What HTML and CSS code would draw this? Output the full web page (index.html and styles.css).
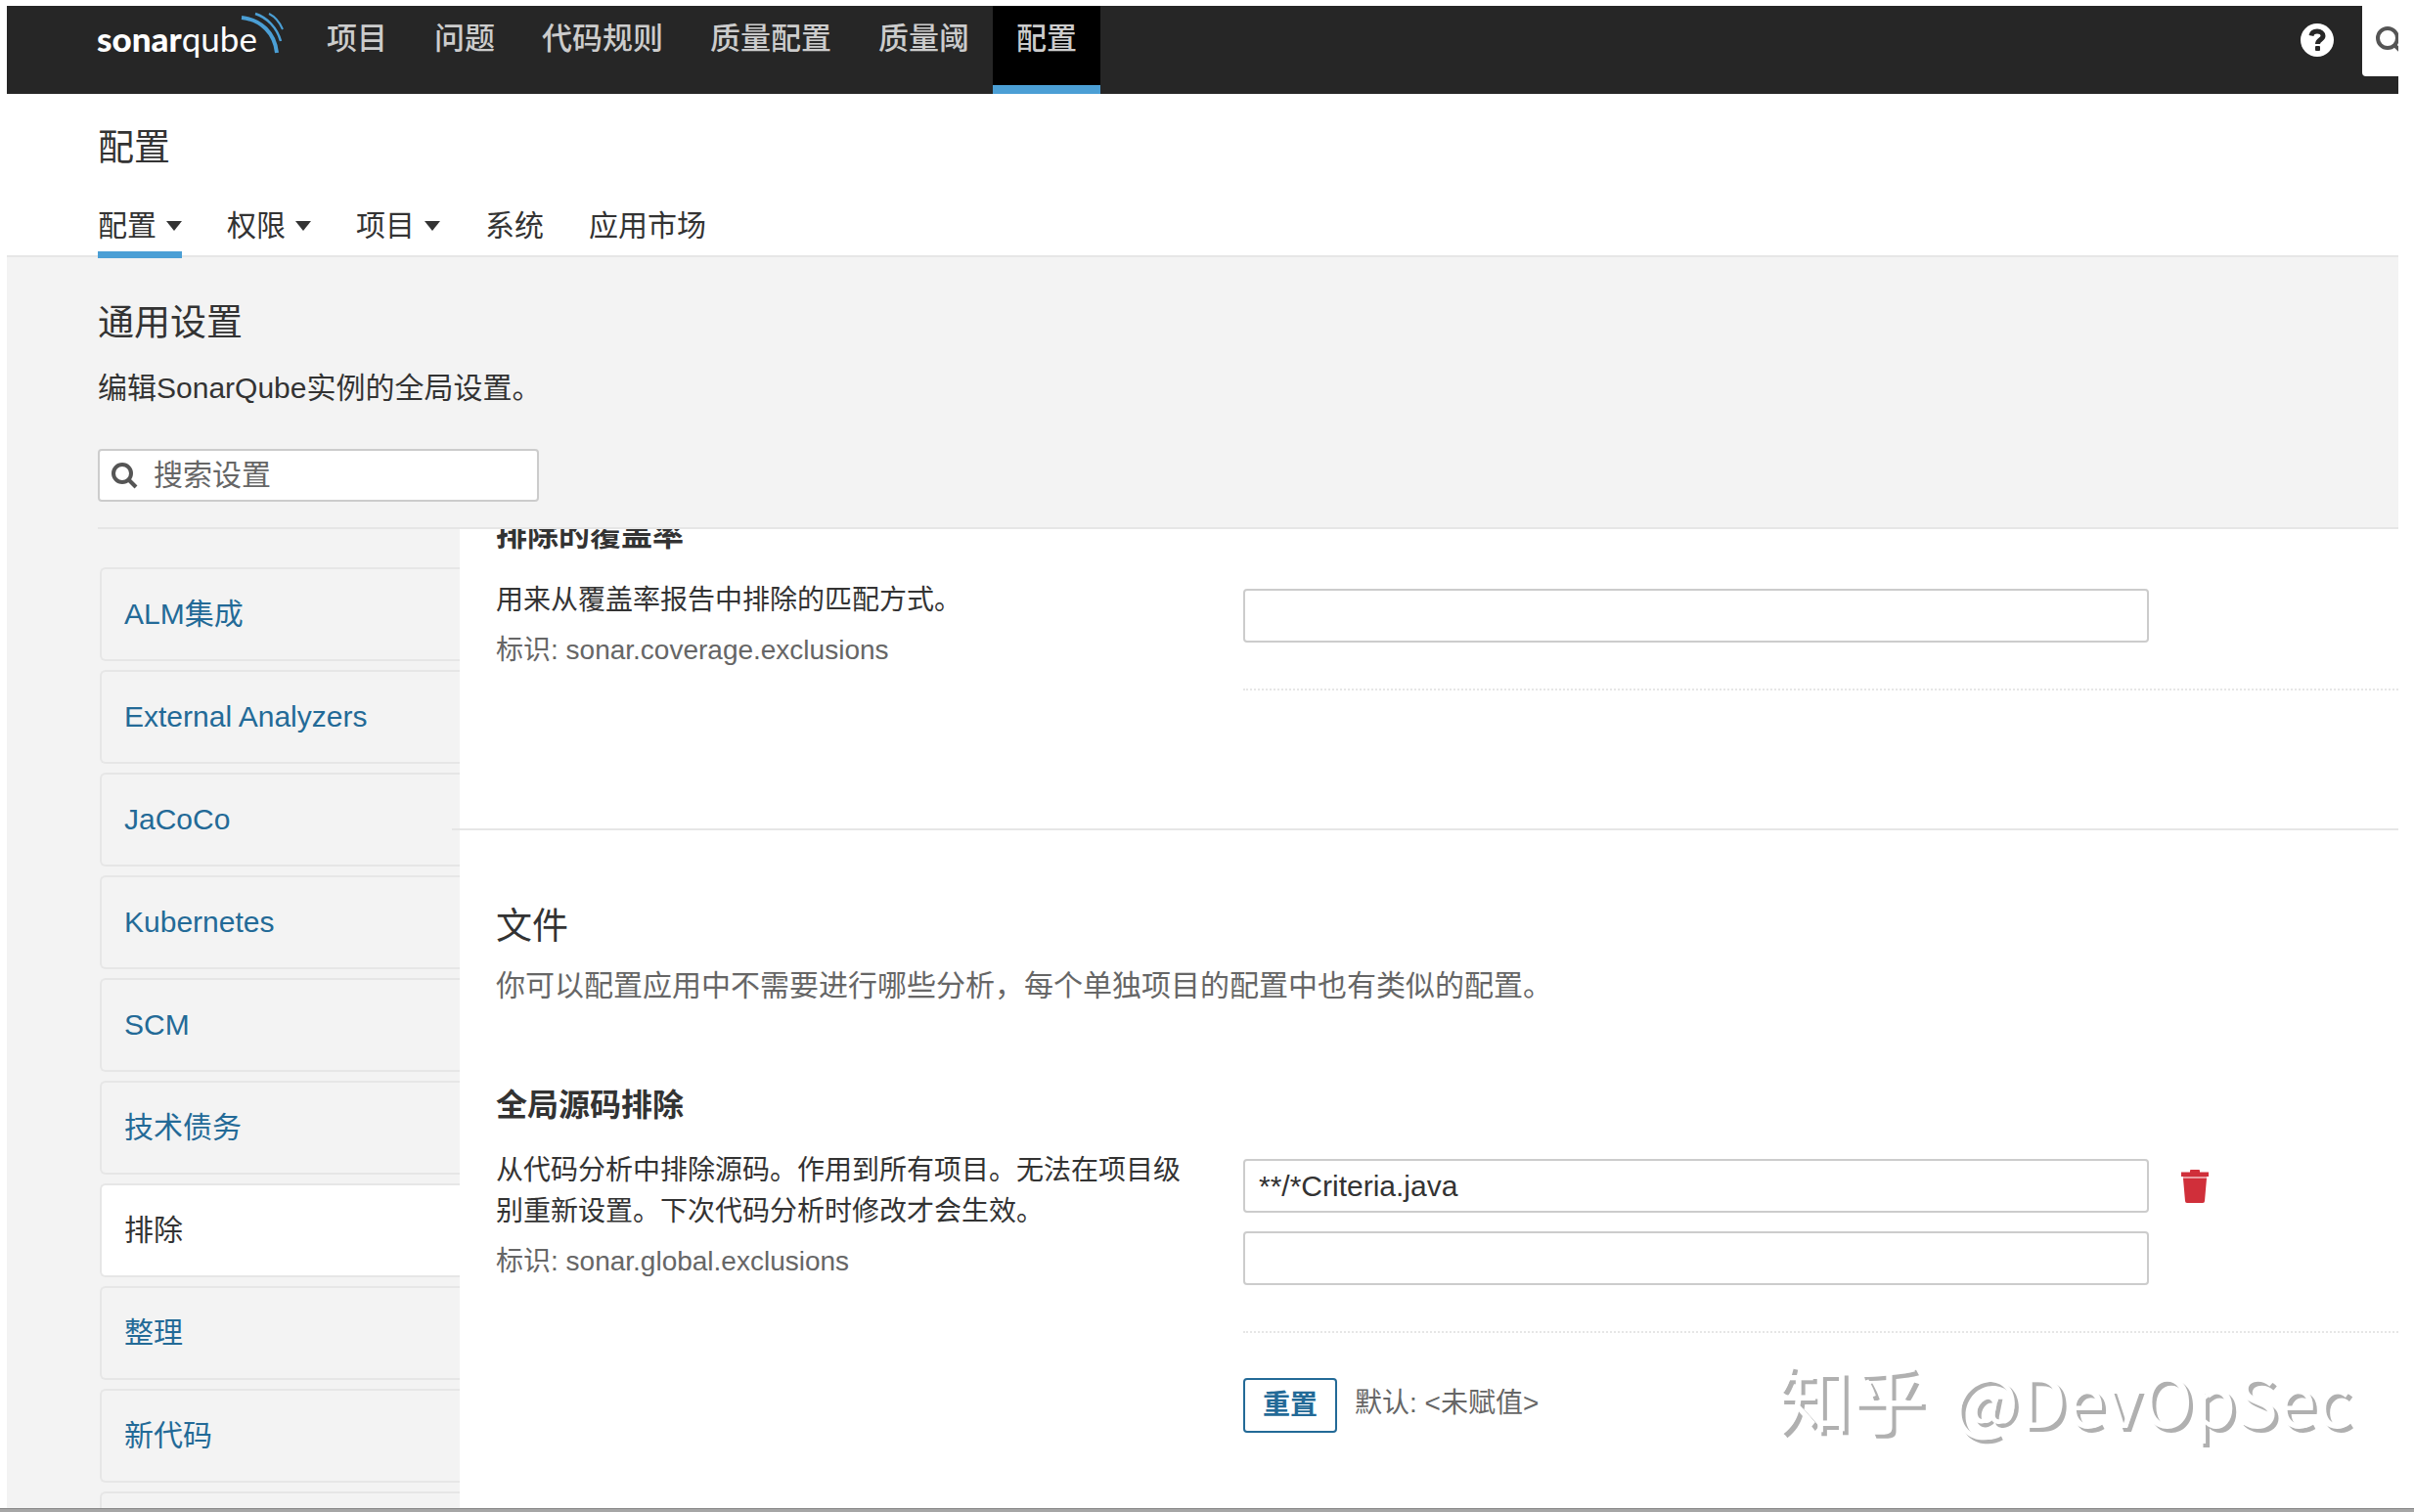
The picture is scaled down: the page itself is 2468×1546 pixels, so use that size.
FILE: index.html
```html
<!DOCTYPE html>
<html lang="zh-CN">
<head>
    <meta charset="UTF-8">
    <meta name="viewport" content="width=device-width, initial-scale=1.0">
    <title>通用设置 - SonarQube</title>
    <link rel="stylesheet" href="styles.css">
</head>
<body>

<div class="app">
    <header class="navbar">
        <a class="logo" href="#">
            <span class="logo-text"><b>sonar</b>qube</span>
            <svg class="logo-waves" width="46" height="44" viewBox="0 0 46 44" fill="none" stroke="#4b9fd5">
                <path d="M2 6C22 8 36 22 38 42" stroke-width="4"/>
                <path d="M16 2C28 6 38 16 42 30" stroke-width="2.500"/>
                <path d="M30 2C36 5 41 11 44 18" stroke-width="2"/>
            </svg>
        </a>
        <nav class="main-nav">
            <a href="#">项目</a>
            <a href="#">问题</a>
            <a href="#">代码规则</a>
            <a href="#">质量配置</a>
            <a href="#">质量阈</a>
            <a href="#" class="active">配置</a>
        </nav>
        <button class="help" type="button" aria-label="帮助">
            <svg width="34" height="34" viewBox="0 0 34 34">
                <circle cx="17" cy="17" r="17" fill="#fff"/>
                <path d="M11 12.500C11.500 9.500 14 8 17 8C20.500 8 23 10 23 12.800C23 16.500 17.500 16.500 17.500 21" fill="none" stroke="#262626" stroke-width="5"/>
                <rect x="15" y="23" width="5" height="5" rx="1" fill="#262626"/>
            </svg>
        </button>
        <button class="nav-search" type="button" aria-label="搜索">
            <svg width="30" height="30" viewBox="0 0 30 30" fill="none" stroke="#555" stroke-width="4">
                <circle cx="12" cy="12" r="10"/>
                <path d="M19 19L28 28"/>
            </svg>
        </button>
    </header>

    <div class="context">
        <h1>配置</h1>
        <nav class="tabs">
            <a href="#" class="active">配置 <i class="caret"></i></a>
            <a href="#">权限 <i class="caret"></i></a>
            <a href="#">项目 <i class="caret"></i></a>
            <a href="#">系统</a>
            <a href="#">应用市场</a>
        </nav>
    </div>

    <main class="page">
        <div class="page-header">
            <h2>通用设置</h2>
            <p>编辑SonarQube实例的全局设置。</p>
            <label class="search-box">
                <svg width="28" height="28" viewBox="0 0 28 28" fill="none" stroke="#555" stroke-width="4">
                    <circle cx="12" cy="12" r="9"/>
                    <path d="M18 18L26 26"/>
                </svg>
                <input type="text" placeholder="搜索设置" aria-label="搜索设置">
            </label>
        </div>

        <div class="settings">
            <nav class="side-menu">
                <a href="#">ALM集成</a>
                <a href="#">External Analyzers</a>
                <a href="#">JaCoCo</a>
                <a href="#">Kubernetes</a>
                <a href="#">SCM</a>
                <a href="#">技术债务</a>
                <a href="#" class="active">排除</a>
                <a href="#">整理</a>
                <a href="#">新代码</a>
                <a href="#" aria-label="更多"></a>
            </nav>

            <div class="panel">
                <section class="category scrolled">
                    <div class="definition">
                        <div class="info">
                            <h4>排除的覆盖率</h4>
                            <p class="desc">用来从覆盖率报告中排除的匹配方式。</p>
                            <p class="key">标识: sonar.coverage.exclusions</p>
                        </div>
                        <div class="values">
                            <div class="value-row">
                                <input type="text" aria-label="排除的覆盖率">
                            </div>
                            <div class="actions"></div>
                        </div>
                    </div>
                </section>

                <section class="category">
                    <h3>文件</h3>
                    <p class="category-desc">你可以配置应用中不需要进行哪些分析，每个单独项目的配置中也有类似的配置。</p>
                    <div class="definition">
                        <div class="info">
                            <h4>全局源码排除</h4>
                            <p class="desc">从代码分析中排除源码。作用到所有项目。无法在项目级别重新设置。下次代码分析时修改才会生效。</p>
                            <p class="key">标识: sonar.global.exclusions</p>
                        </div>
                        <div class="values">
                            <div class="value-row">
                                <input type="text" value="**/*Criteria.java" aria-label="全局源码排除">
                                <button class="delete" type="button" aria-label="删除">
                                    <svg width="28" height="34" viewBox="0 0 28 34" fill="#d02f3a">
                                        <path d="M0 2.500H9V1Q9 0 10 0H18Q19 0 19 1V2.500H28V7H0Z"/>
                                        <path d="M2 9H26L24 32Q24 34 22 34H6Q4 34 4 32Z"/>
                                        <rect x="2" y="7" width="24" height="2" fill="#eb9ba0"/>
                                    </svg>
                                </button>
                            </div>
                            <div class="value-row">
                                <input type="text" aria-label="全局源码排除">
                            </div>
                            <div class="actions">
                                <button class="reset" type="button">重置</button>
                                <span>默认: &lt;未赋值&gt;</span>
                            </div>
                        </div>
                    </div>
                </section>
            </div>
        </div>
    </main>
</div>

<div class="bottom-edge"></div>
<div class="watermark"><b>知乎</b><span>@DevOpSec</span></div>

</body>
</html>
```
FILE: styles.css
```css
* {
    box-sizing: border-box;
}

body {
    display: flex;
    flex-direction: column;
    height: 100vh;
    margin: 0;
    overflow: hidden;
    background-color: #fff;
    color: #333;
    font-family: "Liberation Sans", "Noto Sans CJK SC", sans-serif;
    font-size: 30px;
    line-height: 42px;
}

h1, h2, h3, h4, p {
    margin: 0;
}

h1, h2, h3 {
    font-size: 37px;
    font-weight: normal;
    line-height: 46px;
}

a {
    color: #236a97;
    text-decoration: none;
}

input, button {
    font: inherit;
    color: inherit;
}

button {
    padding: 0;
    border: none;
    background: none;
    cursor: pointer;
}

svg {
    display: block;
}

.app {
    display: flex;
    flex: 1;
    flex-direction: column;
    min-height: 0;
    margin: 6px 16px 0 7px;
}

/* top bar */
.navbar {
    display: flex;
    align-items: flex-start;
    height: 90px;
    padding-left: 92px;
    background-color: #262626;
}

.logo {
    display: flex;
    align-items: flex-start;
    width: 211px;
    padding-top: 6px;
    color: #fff;
}

.logo-text {
    padding-top: 6px;
    font-family: Lato, sans-serif;
    font-size: 35px;
    font-weight: 400;
}

.logo-text b {
    font-weight: 900;
}

.logo-waves {
    margin-left: -18px;
}

.main-nav {
    display: flex;
    flex: 1;
}

.main-nav a {
    height: 90px;
    padding: 13px 24px 0;
    color: #ccc;
    font-size: 31px;
    font-weight: 500;
}

.main-nav .active {
    border-bottom: 9px solid #4b9fd5;
    background-color: #000;
}

.help {
    margin: 18px 29px 0 0;
}

.nav-search {
    width: 37px;
    height: 72px;
    padding-left: 14px;
    overflow: hidden;
    border-bottom-left-radius: 4px;
    background-color: #fff;
}

/* administration header */
.context {
    position: relative;
    padding: 33px 93px 0;
    border-bottom: 2px solid #e6e6e6;
}

.tabs {
    display: flex;
    gap: 46px;
    margin: 34px 0 -3px;
}

.tabs a {
    display: flex;
    align-items: center;
    gap: 10px;
    padding: 1px 0 5px;
    border-bottom: 7px solid transparent;
    color: #333;
}

.tabs .active {
    border-bottom-color: #4b9fd5;
}

.caret {
    border: 8px solid transparent;
    border-top: 10px solid #333;
    border-bottom: none;
}

/* settings page */
.page {
    display: flex;
    flex: 1;
    flex-direction: column;
    min-height: 0;
    padding-left: 93px;
    background-color: #f3f3f3;
}

.page-header {
    padding: 45px 0 26px;
    border-bottom: 2px solid #e6e6e6;
}

.page-header p {
    margin: 22px 0 41px;
}

.search-box {
    display: flex;
    align-items: center;
    gap: 16px;
    width: 451px;
    height: 54px;
    padding: 0 11px;
    border: 2px solid #ccc;
    border-radius: 4px;
    background-color: #fff;
}

.search-box input {
    flex: 1;
    min-width: 0;
    padding: 0;
    border: none;
    outline: none;
}

.search-box input::placeholder {
    color: #666;
}

.settings {
    display: flex;
    flex: 1;
    min-height: 0;
    overflow: hidden;
}

.side-menu {
    display: flex;
    flex-direction: column;
    flex: none;
    gap: 9px;
    width: 370px;
    padding: 39px 0 0 2px;
}

.side-menu a {
    flex: none;
    height: 96px;
    padding: 25px 23px;
    border: 2px solid #e6e6e6;
    border-right: none;
    border-radius: 6px 0 0 6px;
}

.side-menu .active {
    background-color: #fff;
    color: #333;
}

.panel {
    flex: 1;
    background-color: #fff;
}

.category {
    margin-left: -8px;
    padding: 76px 0 0 45px;
}

.category + .category {
    border-top: 2px solid #e6e6e6;
}

/* first category is partly scrolled under the page header */
.scrolled {
    margin-top: -17px;
    padding-top: 0;
    padding-bottom: 141px;
}

.category-desc {
    margin: 16px 0 78px;
    color: #666;
}

.definition {
    display: grid;
    grid-template-columns: 716px 1fr;
    gap: 48px;
}

.info {
    font-size: 28px;
}

.info h4 {
    margin-bottom: 23px;
    font-size: 32px;
    line-height: 46px;
}

.key {
    margin-top: 9px;
    color: #666;
}

.values {
    padding-top: 78px;
}

.value-row {
    display: flex;
    align-items: center;
    gap: 33px;
}

.value-row + .value-row {
    margin-top: 19px;
}

.value-row input {
    width: 926px;
    height: 55px;
    padding: 0 14px;
    border: 2px solid #ccc;
    border-radius: 4px;
    background-color: #fff;
}

.actions {
    display: flex;
    gap: 18px;
    margin-top: 47px;
    border-top: 2px dotted #e6e6e6;
    color: #666;
    font-size: 28px;
}

.actions > * {
    margin-top: 46px;
    line-height: 52px;
}

.reset {
    padding: 0 18px;
    border: 2px solid #236a97;
    border-radius: 4px;
    color: #236a97;
    font-weight: bold;
}

.bottom-edge {
    height: 4px;
    border-top: 1px solid #888;
    background-color: #a6a6a6;
}

.watermark {
    display: flex;
    align-items: baseline;
    gap: 28px;
    position: absolute;
    right: 64px;
    bottom: 72px;
    color: #fff;
    font-family: "Noto Sans CJK SC", sans-serif;
    font-size: 71px;
    line-height: 90px;
    text-shadow: 4px 4px 0 #b0b0b0;
}

.watermark b {
    font-size: 76px;
    font-weight: normal;
}
```
